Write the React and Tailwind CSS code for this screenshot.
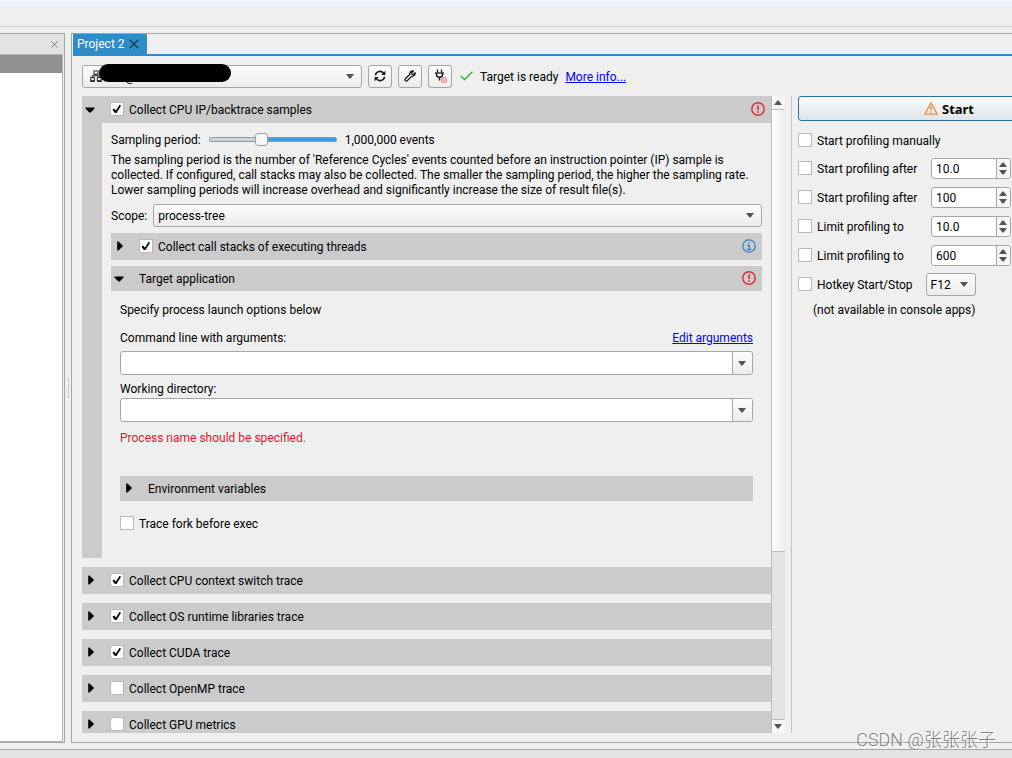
import React from 'react';

const sections = [
  { id: 'ctx', label: 'Collect CPU context switch trace', checked: true },
  { id: 'osrt', label: 'Collect OS runtime libraries trace', checked: true },
  { id: 'cuda', label: 'Collect CUDA trace', checked: true },
  { id: 'openmp', label: 'Collect OpenMP trace', checked: false },
  { id: 'gpu', label: 'Collect GPU metrics', checked: false },
];

const limits = [
  { id: 'start-sec', label: 'Start profiling after', value: '10.0' },
  { id: 'start-frames', label: 'Start profiling after', value: '100' },
  { id: 'limit-sec', label: 'Limit profiling to', value: '10.0' },
  { id: 'limit-frames', label: 'Limit profiling to', value: '600' },
];

function Check({ id, label, checked = false }) {
  return (
    <label htmlFor={id} className="flex items-start gap-[5px]">
      <span className="grid size-[14px] shrink-0">
        <input
          id={id}
          type="checkbox"
          defaultChecked={checked}
          className="peer col-start-1 row-start-1 size-[14px] appearance-none border border-[#b9b9b9] bg-white"
        />
        <svg
          viewBox="0 0 14 14"
          className="pointer-events-none invisible col-start-1 row-start-1 size-[14px] peer-checked:visible"
          fill="none"
          stroke="#000"
        >
          <path d="M3.4 7.2 5.7 10.4" strokeWidth="2.2" />
          <path d="M5.6 10.8 10.3 3.2" strokeWidth="1.7" />
        </svg>
      </span>
      <span className="whitespace-nowrap">{label}</span>
    </label>
  );
}

function Expander({ open = false, label }) {
  return (
    <button type="button" aria-label={label} aria-expanded={open} className="flex h-4 w-4 shrink-0 items-start justify-center pt-[2px]">
      <svg viewBox="0 0 10 10" className="size-[10px]">
        {open ? <path d="M0.5 3.5h9v1L5.8 8.5H4.2L0.5 4.5z" /> : <path d="M2.200 0.5h1.2L7.700 4.4v1.2L3.400 9.5H2.200z" />}
      </svg>
    </button>
  );
}

function Caret({ up = false }) {
  return (
    <svg viewBox="0 0 8 5" className="h-[5px] w-2 shrink-0" fill="#545454">
      {up ? <path d="M0 5 3.4 0.6h1.2L8 5z" /> : <path d="M0 0h8L4.6 4.4H3.4z" />}
    </svg>
  );
}

function ErrorIcon() {
  return (
    <svg viewBox="0 0 14 15" className="h-[15px] w-[14px] shrink-0" fill="none" stroke="#dd2a2f">
      <circle cx="7" cy="7" r="6.2" strokeWidth="1.4" />
      <path d="M7 3.4v4.6M7 9.2v1.6" strokeWidth="1.6" />
    </svg>
  );
}

function InfoIcon() {
  return (
    <svg viewBox="0 0 14 15" className="h-[15px] w-[14px] shrink-0" fill="none" stroke="#3a80bf">
      <circle cx="7" cy="7" r="6.2" strokeWidth="1.3" />
      <path d="M7 3.2v1.6M5.3 6.5h2v4M5 10.5h4.2" strokeWidth="1.3" />
    </svg>
  );
}

function Dropdown({ id, label, value, className = '', inset = 'pl-1' }) {
  return (
    <div className={`grid ${className}`}>
      <select
        id={id}
        aria-label={label}
        className={`col-start-1 row-start-1 h-[23px] w-full appearance-none rounded-[3px] border border-[#a6a6a6] bg-linear-to-b from-[#fdfdfd] to-[#ececec] pt-[1px] ${inset}`}
      >
        <option>{value}</option>
      </select>
      <span className="pointer-events-none col-start-1 row-start-1 mr-2 self-center justify-self-end">
        <Caret />
      </span>
    </div>
  );
}

function EditCombo({ id }) {
  return (
    <div className="flex h-6 overflow-hidden rounded-[3px] border border-[#a6a6a6] bg-white">
      <input id={id} type="text" className="min-w-0 flex-1 px-1 outline-none" />
      <button
        type="button"
        aria-label="Show history"
        className="flex w-5 items-center justify-center border-l border-[#a6a6a6] bg-linear-to-b from-[#fdfdfd] to-[#ececec] pr-[2px]"
      >
        <Caret />
      </button>
    </div>
  );
}

function SpinBox({ label, value }) {
  return (
    <div className="flex h-[21px] w-20 overflow-hidden rounded-[3px] border border-[#a6a6a6] bg-white">
      <input type="text" aria-label={label} defaultValue={value} className="min-w-0 flex-1 pt-[1px] pl-1 outline-none" />
      <div className="flex w-[14px] flex-col items-center justify-center gap-[3px] border-l border-[#a6a6a6] bg-[#f6f6f6] pr-[1px]">
        <button type="button" aria-label="Increase">
          <Caret up />
        </button>
        <button type="button" aria-label="Decrease">
          <Caret />
        </button>
      </div>
    </div>
  );
}

function ToolButton({ label, children }) {
  return (
    <button
      type="button"
      aria-label={label}
      className="flex h-[23px] w-6 items-center justify-center rounded-[3px] border border-[#a6a6a6] bg-linear-to-b from-[#fdfdfd] to-[#ececec] pb-[1px]"
    >
      {children}
    </button>
  );
}

function Toolbar() {
  return (
    <div className="flex items-center pt-[9px] pl-[9px]">
      <div className="relative">
        <Dropdown id="target" label="Target" value="@" className="w-[280px]" inset="pl-[42px]" />
        <svg
          viewBox="0 0 12 12"
          className="pointer-events-none absolute top-[5px] left-2 size-3"
          fill="none"
          stroke="#333"
          strokeWidth="1.1"
        >
          <path d="M4 1h4v3.4H4zM0.8 7.4h3.6v3.2H0.8zM7.4 7.4H11v3.2H7.4zM6 4.4v1.4M2.6 7.4V5.8h6.6v1.6M0 11.4h5M7 11.4h5" />
        </svg>
        <div className="pointer-events-none absolute top-[-1px] left-[17px] h-[18px] w-[132px] rounded-full bg-black" />
      </div>
      <div className="ml-[6px] flex gap-[6px]">
        <ToolButton label="Refresh">
          <svg viewBox="0 0 12 12" className="size-3" fill="none" stroke="#1c1c1c" strokeWidth="1.6">
            <path d="M1.4 5.4A4.6 4.6 0 0 1 9.6 3.2M10.6 6.6A4.6 4.6 0 0 1 2.4 8.8" />
            <path d="M11.4 0.8v4.2H7.2zM0.6 11.2V7h4.2z" fill="#1c1c1c" stroke="none" />
          </svg>
        </ToolButton>
        <ToolButton label="Settings">
          <svg viewBox="0 0 12 12" className="size-3" fill="none" stroke="#1c1c1c" strokeWidth="1.3" strokeLinejoin="round">
            <path d="M9.3 1 7.6 2.8l0.3 1.3 1.3 0.3L11 2.7c0.5 1.9-1 3.7-3.2 3.4L3.2 10.7c-1.2 1-2.9-0.6-1.9-1.9L5.9 4.2C5.5 2.1 7.3 0.5 9.3 1z" />
          </svg>
        </ToolButton>
        <ToolButton label="Disconnect">
          <svg viewBox="0 0 14 14" className="size-[14px]" fill="none">
            <path d="M4.5 0.5v3M8.5 0.5v3" stroke="#1c1c1c" strokeWidth="1.3" />
            <path d="M2 4h9" stroke="#1c1c1c" strokeWidth="1.3" />
            <path d="M3.5 4v2q0 2 3 2.2q3-0.200 3-2.2V4M6.500 8v3.5" stroke="#1c1c1c" strokeWidth="1.5" />
            <circle cx="11" cy="11" r="2.5" stroke="#ea6f6f" />
            <path d="M9.500 11h3" stroke="#ea6f6f" />
          </svg>
        </ToolButton>
      </div>
      <svg viewBox="0 0 13 11" className="ml-2 h-[11px] w-[13px]" fill="none" stroke="#4fae54" strokeWidth="1.5">
        <path d="M0.6 4.8 4.6 8.6 12.4 0.8" />
      </svg>
      <span className="ml-[7px]">Target is ready</span>
      <a href="#info" className="ml-[7px] text-[#0000ff] underline">
        More info...
      </a>
    </div>
  );
}

function TargetApplication() {
  return (
    <div className="px-[9px]">
      <p className="mt-[11px]">Specify process launch options below</p>
      <div className="mt-3 flex justify-between">
        <label htmlFor="cmd">Command line with arguments:</label>
        <a href="#edit" className="text-[#0000ff] underline">
          Edit arguments
        </a>
      </div>
      <div className="mt-[5px]">
        <EditCombo id="cmd" />
      </div>
      <label htmlFor="cwd" className="mt-[6px] mb-[1px] block">
        Working directory:
      </label>
      <EditCombo id="cwd" />
      <p className="mt-2 text-[#e8132f]">Process name should be specified.</p>
      <div className="mt-[30px] flex h-[25px] items-center gap-[11px] bg-[#cbcbcb] pl-[1px]">
        <Expander label="Environment variables" />
        <span>Environment variables</span>
      </div>
      <div className="mt-[15px]">
        <Check id="fork" label="Trace fork before exec" />
      </div>
    </div>
  );
}

function SamplingSection() {
  return (
    <section className="shrink-0">
      <div className="flex h-[27px] items-center bg-[#cbcbcb] pr-[6px]">
        <div className="flex flex-1 items-center gap-3">
          <Expander open label="CPU sampling" />
          <Check id="sampling" label="Collect CPU IP/backtrace samples" checked />
        </div>
        <ErrorIcon />
      </div>
      <div className="border-l-20 border-[#cbcbcb] px-[9px] pt-2 pb-[26px]">
        <div className="flex h-[17px] items-center gap-2">
          <label htmlFor="period">Sampling period:</label>
          <input
            id="period"
            type="range"
            defaultValue="40"
            className="h-[13px] w-32 appearance-none bg-transparent [&::-webkit-slider-runnable-track]:h-[5px] [&::-webkit-slider-runnable-track]:rounded-[2px] [&::-webkit-slider-runnable-track]:border [&::-webkit-slider-runnable-track]:border-[#8a9aa6] [&::-webkit-slider-runnable-track]:bg-[linear-gradient(to_right,#d2d2d2_40%,#3a9ee4_40%)] [&::-webkit-slider-thumb]:-mt-[5px] [&::-webkit-slider-thumb]:size-[13px] [&::-webkit-slider-thumb]:appearance-none [&::-webkit-slider-thumb]:rounded-[3px] [&::-webkit-slider-thumb]:border [&::-webkit-slider-thumb]:border-[#a0a0a0] [&::-webkit-slider-thumb]:bg-[#f8f8f8]"
          />
          <span>1,000,000 events</span>
        </div>
        <p className="mt-[5px] leading-[15px]">
          The sampling period is the number of 'Reference Cycles' events counted before an instruction pointer (IP) sample is
          collected. If configured, call stacks may also be collected. The smaller the sampling period, the higher the sampling
          rate. Lower sampling periods will increase overhead and significantly increase the size of result file(s).
        </p>
        <div className="mt-[6px] flex items-center gap-[6px]">
          <label htmlFor="scope">Scope:</label>
          <Dropdown id="scope" label="Scope" value="process-tree" className="flex-1" />
        </div>
        <div className="mt-[6px] flex h-[27px] items-center bg-[#cbcbcb] pr-[6px]">
          <div className="flex flex-1 items-center gap-[11px] pl-[1px]">
            <Expander label="Call stacks" />
            <Check id="stacks" label="Collect call stacks of executing threads" checked />
          </div>
          <InfoIcon />
        </div>
        <div className="mt-[6px] flex h-[25px] items-center bg-[#cbcbcb] pr-[6px]">
          <div className="flex flex-1 items-center gap-3">
            <Expander open label="Target application" />
            <span>Target application</span>
          </div>
          <ErrorIcon />
        </div>
        <TargetApplication />
      </div>
    </section>
  );
}

function ScrollBar() {
  return (
    <div className="flex w-[14px] shrink-0 flex-col border-l border-[#bcbcbc] bg-[#e3e3e3]">
      <button type="button" aria-label="Scroll up" className="flex h-[13px] items-center justify-center bg-[#f6f6f6] pr-[1px]">
        <Caret up />
      </button>
      <div className="h-[443px] border-y border-[#bcbcbc] bg-linear-to-r from-white to-[#ededed]" />
      <div className="flex-1" />
      <button
        type="button"
        aria-label="Scroll down"
        className="flex h-[14px] items-center justify-center border-t border-[#bcbcbc] bg-[#f8f8f8] pr-[1px]"
      >
        <Caret />
      </button>
    </div>
  );
}

function StartPanel() {
  return (
    <aside className="ml-[6px] w-[221px] shrink-0 overflow-hidden border-l border-[#c6c6c6] pl-[6px]">
      <button
        type="button"
        className="flex h-[25px] w-[302px] items-center justify-center gap-1 rounded-[3px] border border-[#2c6f9b] bg-linear-to-b from-[#fbfcfd] to-[#dfe4e8] font-['Noto_Sans',sans-serif] text-[13px] font-bold"
      >
        <svg viewBox="0 0 14 13" className="h-[13px] w-[14px]" fill="none" stroke="#f58b3c" strokeWidth="1.3" strokeLinejoin="round">
          <path d="M7 0.9 13.3 12.2H0.7z" />
          <path d="M7 4.2v4M7 9.2v1.6" strokeWidth="1.5" />
        </svg>
        Start
      </button>
      <div className="mt-3 mb-[9px]">
        <Check id="manual" label="Start profiling manually" />
      </div>
      <div className="flex w-[213px] flex-col gap-2">
        {limits.map((item) => (
          <div key={item.id} className="flex items-center justify-between">
            <Check id={item.id} label={item.label} />
            <SpinBox label={item.label} value={item.value} />
          </div>
        ))}
      </div>
      <div className="mt-[7px] flex items-center gap-[13px]">
        <Check id="hotkey" label="Hotkey Start/Stop" />
        <Dropdown id="key" label="Hotkey" value="F12" className="w-[50px]" />
      </div>
      <p className="mt-[6px] pl-[15px]">(not available in console apps)</p>
    </aside>
  );
}

function LeftDock() {
  return (
    <aside className="flex w-[65px] shrink-0 flex-col border-t border-r border-b border-[#a6a6a6]">
      <div className="flex h-5 items-center justify-end bg-[#e3e3e3] pr-[6px]">
        <button type="button" aria-label="Close panel">
          <svg viewBox="0 0 7 7" className="size-[7px]" stroke="#777">
            <path d="M0.5 0.5l6 6M6.5 0.5l-6 6" />
          </svg>
        </button>
      </div>
      <div className="mr-[1px] flex-1 border-t border-r border-b border-[#b4b4b4] bg-white">
        <div className="h-[18px] bg-[#909090]" />
      </div>
    </aside>
  );
}

export default function App() {
  return (
    <div className="relative flex h-screen flex-col overflow-hidden bg-[#efefef] font-[Roboto,'Liberation_Sans',sans-serif] text-[12px] leading-4 text-black">
      <header className="h-[27px] shrink-0 border-b border-[#d0d0d0]">
        <div className="h-[7px] bg-[#edf3fb]" />
      </header>

      <div className="mt-[6px] flex min-h-0 flex-1">
        <LeftDock />
        <div className="flex w-[6px] shrink-0 items-center justify-center">
          <div className="h-[18px] border-l border-dotted border-[#b0b0b0]" />
        </div>
        <main className="flex min-w-0 flex-1 flex-col border-t border-b border-l border-[#a6a6a6] pl-[1px]">
          <div className="flex border-b-2 border-[#308cc6]">
            <button type="button" className="flex h-5 items-center gap-1 bg-[#308cc6] pr-2 pl-1 text-white">
              Project 2
              <svg viewBox="0 0 10 10" className="size-[10px]" stroke="#173f5a" strokeWidth="1.3">
                <path d="M0.7 0.7l8.6 8.6M9.3 0.7l-8.6 8.6" />
              </svg>
            </button>
          </div>
          <Toolbar />
          <div className="mt-2 mb-[9px] flex min-h-0 flex-1 pl-[9px]">
            <div className="flex min-w-0 flex-1 flex-col gap-[9px] overflow-hidden">
              <SamplingSection />
              {sections.map((section) => (
                <div key={section.id} className="flex h-[27px] shrink-0 items-center gap-[11px] bg-[#cbcbcb] pl-[1px]">
                  <Expander label={section.label} />
                  <Check id={section.id} label={section.label} checked={section.checked} />
                </div>
              ))}
            </div>
            <ScrollBar />
            <StartPanel />
          </div>
        </main>
      </div>

      <footer className="mt-[6px] h-[9px] shrink-0 border-t border-[#a6a6a6] bg-[#e3e3e3]" />

      <span className="absolute right-4 bottom-[6px] font-[Roboto,'Noto_Sans_CJK_SC',sans-serif] text-[18px] leading-6 font-light text-[#808080] [text-shadow:1px_1px_0_#fff]">
        CSDN @张张张子
      </span>
    </div>
  );
}
